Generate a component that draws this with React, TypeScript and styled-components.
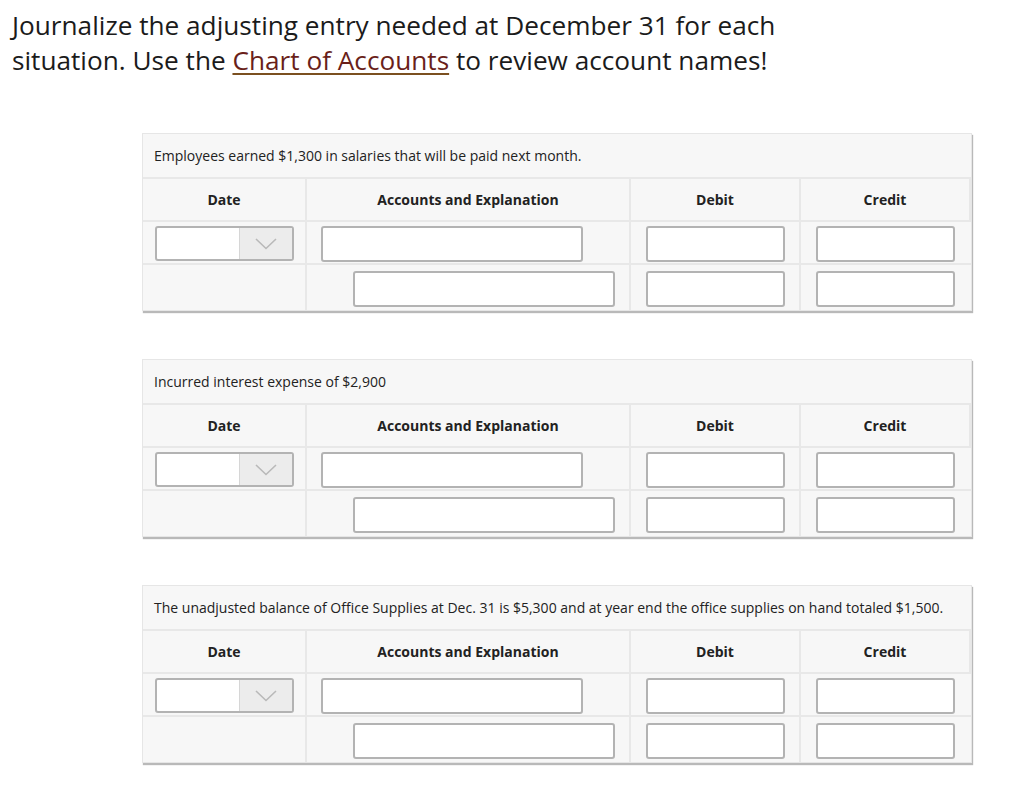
import styled, { createGlobalStyle } from 'styled-components';

const GlobalStyle = createGlobalStyle`
  body {
    margin: 0;
    background: #ffffff;
    font-family: 'Open Sans', 'Liberation Sans', sans-serif;
    color: #222222;
  }
`;

const Page = styled.div`
  padding: 8px 0 40px 12px;
`;

const Heading = styled.p`
  margin: 0;
  font-size: 26.2px;
  line-height: 35px;
  color: #1b1b1b;
`;

const ChartLink = styled.a`
  color: #6a1f1a;
  text-decoration: underline;
  text-decoration-color: #7b5020;
  text-decoration-thickness: 2px;
  text-underline-offset: 3px;
`;

const Problems = styled.div`
  display: flex;
  flex-direction: column;
  gap: 48px;
  margin: 55px 0 0 130px;
`;

const Panel = styled.div`
  width: 828px;
  background: #f7f7f7;
  border: 1px solid #e6e6e6;
  box-shadow: 1px 2px 1px #b9b9b9;
`;

const Description = styled.div`
  height: 43px;
  display: flex;
  align-items: center;
  padding: 0 11px;
  font-size: 14px;
  color: #222222;
  border-bottom: 2px solid #e8e8e8;
  white-space: nowrap;
`;

const Grid = styled.div`
  display: grid;
  grid-template-columns: 164px 324px 170px 170px;
`;

const HeadCell = styled.div`
  height: 41px;
  display: flex;
  align-items: center;
  justify-content: center;
  font-size: 14px;
  font-weight: 700;
  color: #222222;
  border-right: 2px solid #e8e8e8;
  border-bottom: 2px solid #e8e8e8;
  &:last-child {
    border-right: none;
  }
`;

const Cell = styled.div<{ $indent?: number; $last?: boolean; $bottom?: boolean }>`
  height: ${({ $bottom }) => ($bottom ? '45px' : '43px')};
  display: flex;
  align-items: center;
  padding-top: 2px;
  padding-left: ${({ $indent }) => $indent ?? 14}px;
  border-right: ${({ $last }) => ($last ? 'none' : '2px solid #e8e8e8')};
  border-bottom: ${({ $bottom }) => ($bottom ? 'none' : '2px solid #e8e8e8')};
  box-sizing: border-box;
`;

const TextBox = styled.div<{ $width: number }>`
  width: ${({ $width }) => $width}px;
  height: 36px;
  box-sizing: border-box;
  background: #ffffff;
  border: 2px solid #b3b3b3;
  border-radius: 3px;
`;

const Select = styled.div`
  width: 139px;
  height: 35px;
  box-sizing: border-box;
  display: flex;
  background: #ffffff;
  border: 2px solid #b3b3b3;
  border-radius: 3px;
  overflow: hidden;
`;

const SelectField = styled.div`
  flex: 1;
`;

const SelectButton = styled.div`
  width: 52px;
  display: flex;
  align-items: center;
  justify-content: center;
  background: #ececec;
  border-left: 1px solid #d6d6d6;
`;

const Chevron = () => (
  <svg width="22" height="12" viewBox="0 0 22 12">
    <path d="M1 1 L11 10.5 L21 1" fill="none" stroke="#b9b9b9" strokeWidth="1.6" />
  </svg>
);

const problems: string[] = [
  'Employees earned $1,300 in salaries that will be paid next month.',
  'Incurred interest expense of $2,900',
  'The unadjusted balance of Office Supplies at Dec. 31 is $5,300 and at year end the office supplies on hand totaled $1,500.',
];

const JournalPanel = ({ text }: { text: string }) => (
  <Panel>
    <Description>{text}</Description>
    <Grid>
      <HeadCell>Date</HeadCell>
      <HeadCell>Accounts and Explanation</HeadCell>
      <HeadCell>Debit</HeadCell>
      <HeadCell>Credit</HeadCell>

      <Cell $indent={12}>
        <Select>
          <SelectField />
          <SelectButton>
            <Chevron />
          </SelectButton>
        </Select>
      </Cell>
      <Cell $indent={14}>
        <TextBox $width={262} />
      </Cell>
      <Cell $indent={15}>
        <TextBox $width={139} />
      </Cell>
      <Cell $indent={15} $last>
        <TextBox $width={139} />
      </Cell>

      <Cell $bottom />
      <Cell $indent={46} $bottom>
        <TextBox $width={262} />
      </Cell>
      <Cell $indent={15} $bottom>
        <TextBox $width={139} />
      </Cell>
      <Cell $indent={15} $last $bottom>
        <TextBox $width={139} />
      </Cell>
    </Grid>
  </Panel>
);

export default function App(): JSX.Element {
  return (
    <Page>
      <GlobalStyle />
      <Heading>
        Journalize the adjusting entry needed at December 31 for each
        <br />
        situation. Use the <ChartLink href="#">Chart of Accounts</ChartLink> to review account names!
      </Heading>
      <Problems>
        {problems.map((p) => (
          <JournalPanel key={p} text={p} />
        ))}
      </Problems>
    </Page>
  );
}
